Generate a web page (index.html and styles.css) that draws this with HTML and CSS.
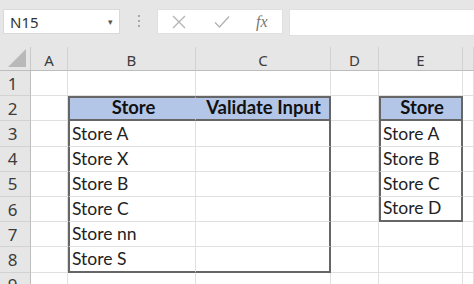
FILE: index.html
```html
<!DOCTYPE html>
<html lang="en">
<head>
    <meta charset="UTF-8">
    <title>Store validation</title>
    <link rel="stylesheet" href="styles.css">
</head>
<body>
    <div class="toolbar">
        <div class="namebox">
            <span>N15</span>
            <span class="caret">&#9662;</span>
        </div>
        <div class="grip">
            <i></i><i></i><i></i>
        </div>
        <div class="fbuttons">
            <svg class="btn-x" width="14" height="14" viewBox="0 0 14 14">
                <path d="M1 1L13 13M13 1L1 13" stroke="#b3b3b3" stroke-width="1.3" fill="none"/>
            </svg>
            <svg class="btn-ok" width="16" height="14" viewBox="0 0 16 14">
                <path d="M1 7.5L5.5 12L15 1.5" stroke="#b3b3b3" stroke-width="1.4" fill="none"/>
            </svg>
            <span class="fx">fx</span>
        </div>
        <div class="fbar"></div>
    </div>

    <div class="sheet">
        <div class="corner">
            <svg width="18" height="18" viewBox="0 0 18 18"><polygon points="18,0 18,18 0,18" fill="#b9b9b9"/></svg>
        </div>
        <div class="colhead">A</div>
        <div class="colhead">B</div>
        <div class="colhead">C</div>
        <div class="colhead">D</div>
        <div class="colhead">E</div>
        <div class="colhead"></div>

        <!-- row 1 -->
        <div class="rowhead">1</div>
        <div class="cell"></div><div class="cell"></div><div class="cell"></div>
        <div class="cell"></div><div class="cell"></div><div class="cell"></div>

        <!-- row 2 -->
        <div class="rowhead">2</div>
        <div class="cell"></div>
        <div class="cell th th-l">Store</div>
        <div class="cell th th-r">Validate Input</div>
        <div class="cell"></div>
        <div class="cell th th-l th-r">Store</div>
        <div class="cell"></div>

        <!-- row 3 -->
        <div class="rowhead">3</div>
        <div class="cell"></div>
        <div class="cell tb-l">Store A</div>
        <div class="cell tb-r"></div>
        <div class="cell"></div>
        <div class="cell tb-l tb-r">Store A</div>
        <div class="cell"></div>

        <!-- row 4 -->
        <div class="rowhead">4</div>
        <div class="cell"></div>
        <div class="cell tb-l">Store X</div>
        <div class="cell tb-r"></div>
        <div class="cell"></div>
        <div class="cell tb-l tb-r">Store B</div>
        <div class="cell"></div>

        <!-- row 5 -->
        <div class="rowhead">5</div>
        <div class="cell"></div>
        <div class="cell tb-l">Store B</div>
        <div class="cell tb-r"></div>
        <div class="cell"></div>
        <div class="cell tb-l tb-r">Store C</div>
        <div class="cell"></div>

        <!-- row 6 -->
        <div class="rowhead">6</div>
        <div class="cell"></div>
        <div class="cell tb-l">Store C</div>
        <div class="cell tb-r"></div>
        <div class="cell"></div>
        <div class="cell tb-l tb-r tb-b">Store D</div>
        <div class="cell"></div>

        <!-- row 7 -->
        <div class="rowhead">7</div>
        <div class="cell"></div>
        <div class="cell tb-l">Store nn</div>
        <div class="cell tb-r"></div>
        <div class="cell"></div><div class="cell"></div><div class="cell"></div>

        <!-- row 8 -->
        <div class="rowhead">8</div>
        <div class="cell"></div>
        <div class="cell tb-l tb-b">Store S</div>
        <div class="cell tb-r tb-b"></div>
        <div class="cell"></div><div class="cell"></div><div class="cell"></div>

        <!-- row 9 -->
        <div class="rowhead">9</div>
        <div class="cell"></div><div class="cell"></div><div class="cell"></div>
        <div class="cell"></div><div class="cell"></div><div class="cell"></div>
    </div>
</body>
</html>
```

FILE: styles.css
```css
body {
    margin: 0;
    width: 474px;
    height: 284px;
    overflow: hidden;
    background-color: #ffffff;
    font-family: Lato, 'Liberation Sans', sans-serif;
    color: #222;
}
.toolbar {
    display: flex;
    align-items: flex-start;
    height: 47px;
    box-sizing: border-box;
    padding: 9px 0 0 3px;
    background-color: #e6e6e6;
}
.namebox {
    display: flex;
    align-items: center;
    justify-content: space-between;
    width: 117px;
    height: 25px;
    box-sizing: border-box;
    padding: 0 6px 0 6px;
    background-color: #fff;
    border: 1px solid #d9d9d9;
    font-family: 'Noto Sans', sans-serif;
    font-size: 15px;
    color: #333;
}
.caret {
    font-size: 9px;
    color: #555;
}
.grip {
    display: flex;
    flex-direction: column;
    align-items: center;
    gap: 3px;
    width: 37px;
    padding-top: 6px;
}
.grip i {
    width: 2px;
    height: 2px;
    background-color: #a8a8a8;
}
.fbuttons {
    display: flex;
    align-items: center;
    width: 126px;
    height: 25px;
    box-sizing: border-box;
    background-color: #fff;
    border: 1px solid #e0e0e0;
}
.btn-x {
    margin-left: 14px;
}
.btn-ok {
    margin-left: 28px;
}
.fx {
    margin-left: 26px;
    font-family: 'Liberation Serif', serif;
    font-style: italic;
    font-size: 16px;
    color: #777;
}
.fbar {
    flex: 1;
    height: 25px;
    margin-left: 6px;
    background-color: #fff;
    border: 1px solid #e0e0e0;
    border-right: none;
}
.sheet {
    display: grid;
    grid-template-columns: 31px 37px 128px 135px 48px 84px 1fr;
    grid-template-rows: 24px repeat(9, 25.2px);
}
.corner {
    display: flex;
    align-items: flex-end;
    justify-content: flex-end;
    padding: 0 4px 3px 0;
    background-color: #e6e6e6;
    border-right: 1px solid #c8c8c8;
    border-bottom: 1px solid #bdbdbd;
}
.colhead {
    display: flex;
    align-items: center;
    justify-content: center;
    padding-top: 2px;
    background-color: #e6e6e6;
    border-right: 1px solid #d2d2d2;
    border-bottom: 1px solid #bdbdbd;
    font-family: 'Noto Sans', sans-serif;
    font-size: 15px;
    color: #3c3c3c;
}
.rowhead {
    display: flex;
    align-items: center;
    justify-content: center;
    padding-right: 5px;
    background-color: #e6e6e6;
    border-right: 1px solid #bdbdbd;
    border-bottom: 1px solid #d2d2d2;
    font-family: 'Noto Sans', sans-serif;
    font-size: 17px;
    color: #3c3c3c;
}
.cell {
    display: flex;
    align-items: flex-end;
    box-sizing: border-box;
    padding: 0 0 2px 2px;
    border-right: 1px solid #e0e0e0;
    border-bottom: 1px solid #e0e0e0;
    font-size: 17.5px;
    line-height: 20px;
    white-space: nowrap;
}
.th {
    justify-content: center;
    background-color: #b4c6e7;
    border-top: 2px solid #666;
    border-bottom: 2px solid #666;
    font-size: 18.5px;
    font-weight: bold;
    color: #111;
}
.th-l {
    border-left: 2px solid #666;
    border-right-color: #b4c6e7;
}
.th-r {
    border-right: 2px solid #666;
}
.tb-l {
    border-left: 2px solid #666;
}
.tb-r {
    border-right: 2px solid #666;
}
.tb-b {
    border-bottom: 2px solid #666;
}
```
